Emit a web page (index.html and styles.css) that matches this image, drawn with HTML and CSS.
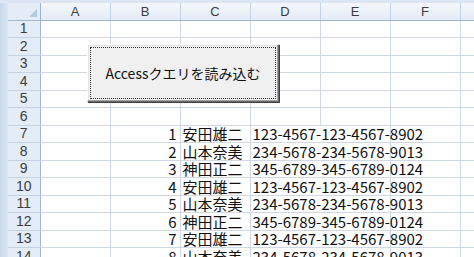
FILE: index.html
```html
<!DOCTYPE html>
<html lang="ja">
<head>
  <meta charset="UTF-8" />
  <title>Access クエリ</title>
  <link rel="stylesheet" href="styles.css">
</head>
<body>
  <div class="window">
    <div class="gutter"></div>
    <div class="sheet">
      <table class="grid">
        <colgroup>
          <col class="col-head">
          <col class="col"><col class="col"><col class="col">
          <col class="col"><col class="col"><col class="col">
          <col class="col-rest">
        </colgroup>
        <thead>
          <tr>
            <th class="corner"><span class="tri"></span></th>
            <th>A</th><th>B</th><th>C</th><th>D</th><th>E</th><th>F</th><th></th>
          </tr>
        </thead>
        <tbody id="rows"></tbody>
      </table>

      <!-- bouton de la feuille -->
      <button class="sheet-btn"><span class="focus">Accessクエリを読み込む</span></button>
    </div>
  </div>

  <script>
    const data = [
      [1, '安田雄二', '123-4567-123-4567-8902'],
      [2, '山本奈美', '234-5678-234-5678-9013'],
      [3, '神田正二', '345-6789-345-6789-0124'],
      [4, '安田雄二', '123-4567-123-4567-8902'],
      [5, '山本奈美', '234-5678-234-5678-9013'],
      [6, '神田正二', '345-6789-345-6789-0124'],
      [7, '安田雄二', '123-4567-123-4567-8902'],
      [8, '山本奈美', '234-5678-234-5678-9013']
    ];
    const tbody = document.getElementById('rows');
    for (let r = 1; r <= 14; r++) {
      const tr = document.createElement('tr');
      const d = data[r - 7];
      let html = `<th>${r}</th><td></td>`;
      if (d) {
        // le numéro déborde sur la colonne E
        html += `<td class="num">${d[0]}</td><td>${d[1]}</td><td class="over" colspan="2">${d[2]}</td>`;
      } else {
        html += '<td></td><td></td><td></td><td></td>';
      }
      html += '<td></td><td></td>';
      tr.innerHTML = html;
      tbody.appendChild(tr);
    }
  </script>
</body>
</html>
```

FILE: styles.css
```css
* {
  margin: 0;
  padding: 0;
  box-sizing: border-box;
}

body {
  width: 474px;
  height: 257px;
  overflow: hidden;
  background: #fff;
  font-family: "Noto Sans CJK JP", "DejaVu Sans", sans-serif;
}

/* FENETRE */
.window {
  display: flex;
  height: 257px;
  padding-top: 3px;
  background: #dbe5f3;
}

.gutter {
  width: 8px;
  flex: none;
  background: linear-gradient(to right, #c9d8ec, #dae5f3);
}

.sheet {
  position: relative;
  flex: 1;
  background: #fff;
  overflow: hidden;
}

/* GRILLE */
.grid {
  border-collapse: collapse;
  table-layout: fixed;
  width: 480px;
}
.col-head { width: 32px; }
.col { width: 70px; }
.col-rest { width: 28px; }

.grid th {
  font-weight: normal;
  font-family: "Liberation Sans", "Noto Sans", sans-serif;
  color: #3d3d3d;
  background: linear-gradient(to bottom, #f3f6fb, #e4ebf5);
  border: 1px solid #9eb6ce;
  border-top: none;
}
.grid thead th {
  height: 17px;
  font-size: 13px;
  line-height: 15px;
  border-bottom: 1px solid #9eb6ce;
  border-left-color: #c5d2e3;
  border-right-color: #c5d2e3;
}
.grid thead th.corner {
  position: relative;
  border-left: none;
  border-right: 1px solid #9eb6ce;
  background: #e4ecf7;
}
.tri {
  position: absolute;
  right: 3px;
  bottom: 3px;
  width: 0;
  height: 0;
  border-left: 8px solid transparent;
  border-bottom: 8px solid #b6c8de;
}

.grid tbody th {
  height: 17.5px;
  font-size: 14px;
  line-height: 15px;
  border-left: none;
  border-bottom-color: #c5d2e3;
  background: #e4ecf7;
}

.grid td {
  height: 17.5px;
  border: 1px solid #d0d7e5;
  font-size: 15px;
  line-height: 15px;
  color: #111;
  white-space: nowrap;
  padding: 0 1px 0 2px;
}
.grid td.num {
  text-align: right;
  padding-right: 3px;
}

/* BOUTON */
.sheet-btn {
  position: absolute;
  left: 79px;
  top: 41px;
  width: 192px;
  height: 58px;
  background: #f0f0f0;
  border: 1px solid #fff;
  border-right-color: #6d6d6d;
  border-bottom-color: #6d6d6d;
  box-shadow: 1px 1px 0 #404040, inset -1px -1px 0 #a0a0a0, inset 1px 1px 0 #e3e3e3;
  padding: 2px;
  font-family: "Noto Sans CJK JP", sans-serif;
  font-size: 14px;
  color: #111;
}
.sheet-btn .focus {
  display: flex;
  align-items: center;
  justify-content: center;
  height: 100%;
  border: 1px dotted #333;
}
```
